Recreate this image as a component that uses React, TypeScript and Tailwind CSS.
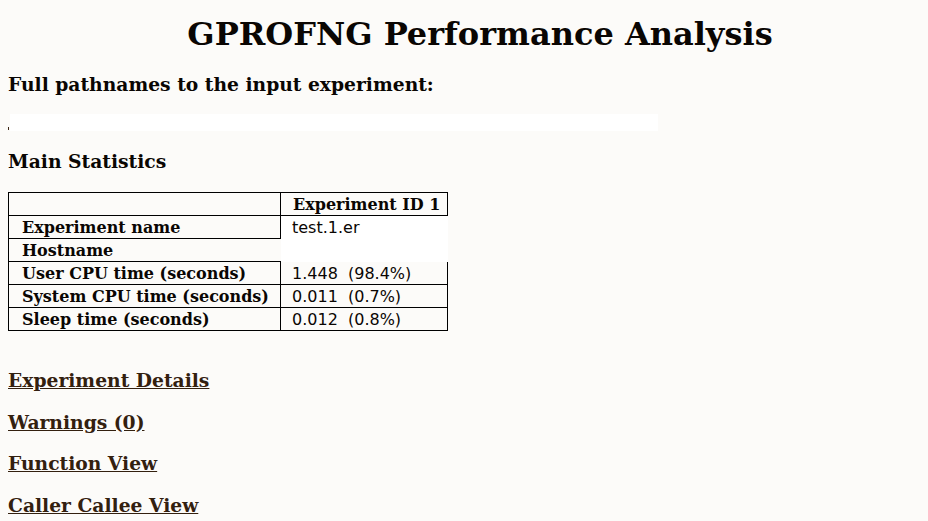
const stats = [
  { label: 'User CPU time (seconds)', value: '1.448\u00a0\u00a0(98.4%)' },
  { label: 'System CPU time (seconds)', value: '0.011\u00a0\u00a0(0.7%)' },
  { label: 'Sleep time (seconds)', value: '0.012\u00a0\u00a0(0.8%)' },
];

const links = ['Experiment Details', 'Warnings (0)', 'Function View', 'Caller Callee View'];

export default function App() {
  return (
    <div className="min-h-[521px] bg-[#fcfbf9] px-2 font-['DejaVu_Serif',serif] text-[#0a0603]">
      <h1 className="pl-8 pt-[15px] text-center text-[32px] font-bold leading-[38px]">
        GPROFNG Performance Analysis
      </h1>

      <h3 className="mt-[20px] text-[18.72px] font-bold leading-[22px]">
        Full pathnames to the input experiment:
      </h3>
      {/* path line, rendered blank */}
      <div className="mt-[19px] flex h-[17px] items-end">
        <span className="mb-[1px] h-[3px] w-[1px] bg-[#3a2413]" />
        <div className="ml-[1px] h-[17px] w-[648px] bg-white" />
      </div>

      <h3 className="mt-[19px] text-[18.72px] font-bold leading-[22px]">Main Statistics</h3>

      <table className="mt-[20px] w-[440px] table-fixed border-collapse text-[16px]">
        <tbody>
          <tr>
            <td className="w-[272px] border border-black p-0 leading-[22px]"></td>
            <td className="border border-black pl-[12px] pt-[1px] align-top font-bold leading-[21px]">
              Experiment ID 1
            </td>
          </tr>
          <tr>
            <td className="border border-black pl-[13px] pt-[1px] font-bold leading-[21px]">Experiment name</td>
            <td className="border border-black bg-white pl-[11px] pt-[1px] font-['DejaVu_Sans',sans-serif] leading-[21px] [border-bottom-style:hidden] [border-right-style:hidden]">
              test.1.er
            </td>
          </tr>
          <tr>
            <td className="border border-black pl-[13px] pt-[1px] font-bold leading-[21px] [border-right-style:hidden]">Hostname</td>
            <td className="border border-black bg-white pt-[1px] leading-[21px] [border-bottom-style:hidden] [border-left-style:hidden] [border-right-style:hidden]"></td>
          </tr>
          {stats.map((s) => (
            <tr key={s.label}>
              <td className="border border-black pl-[13px] pt-[1px] font-bold leading-[21px]">{s.label}</td>
              <td className="border border-black pl-[11px] pt-[1px] font-['DejaVu_Sans',sans-serif] leading-[21px]">
                {s.value}
              </td>
            </tr>
          ))}
        </tbody>
      </table>

      <div className="mt-[38px] flex flex-col items-start gap-[19.5px]">
        {links.map((l) => (
          <a key={l} href="#" className="text-[18.72px] font-bold leading-[22px] text-[#33200f] underline">
            {l}
          </a>
        ))}
      </div>
    </div>
  );
}
